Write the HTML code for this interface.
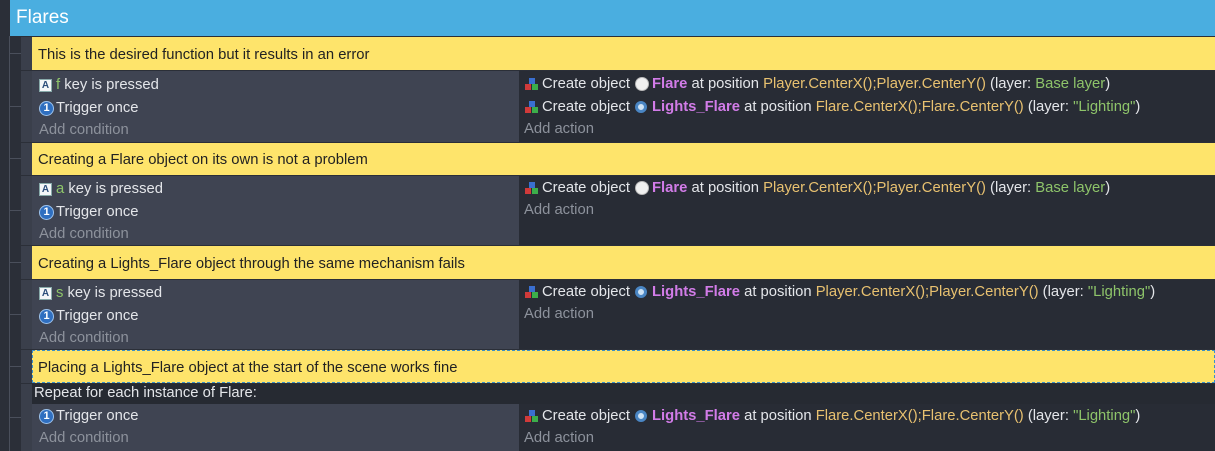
<!DOCTYPE html>
<html><head><meta charset="utf-8"><style>
*{margin:0;padding:0;box-sizing:border-box}
body{width:1215px;height:451px;background:#2b2f38;font-family:"Segoe UI","Liberation Sans",sans-serif;font-size:14.8px;color:#e4e6ea;position:relative;overflow:hidden}
.a{position:absolute}
.vl{left:9px;top:36px;width:1px;height:415px;background:#4a4f5b}
.tick{left:10px;width:11px;height:1px;background:#4a4f5b}
.hdr{left:10px;top:0;width:1205px;height:36px;background:#4aaee0;color:#fff;font-size:19px;padding:7px 0 0 6px}
.gut{left:21px;width:11px;background:#3a3f4b}
.cm{left:32px;width:1183px;background:#fee46b;color:#222;padding:2px 0 0 6px;display:flex;align-items:center}
.cond{left:32px;width:487px;background:#3f4452}
.act{left:519px;width:696px;background:#282c35}
.ln{position:absolute;white-space:nowrap;display:flex;align-items:center;margin-top:1px}
.gray{color:#8d929c}
.key{display:inline-block;width:13px;height:13px;background:#f4f6f8;border:1px solid #8aa;color:#2c4d7a;font-size:10px;font-weight:bold;text-align:center;line-height:12px;margin-right:4px}
.one{display:inline-block;width:15px;height:15px;border-radius:50%;background:#2f6fc0;border:1px solid #9cc3ee;color:#fff;font-size:11px;font-weight:bold;text-align:center;line-height:13px;margin-right:2px}
.g{color:#8ec46a}.y{color:#e8c170}.p{color:#d27ce8;font-weight:bold}
.cube{display:inline-block;width:14px;height:12px;position:relative;margin-right:3px}
.cube i{position:absolute;width:6px;height:6px}
.fl{display:inline-block;width:14px;height:14px;border-radius:50%;background:#f0f0f0;border:1px solid #bbb;margin:0 3px 0 5px}
.lf{display:inline-block;width:12px;height:12px;border-radius:50%;background:#cfe3f5;border:3px solid #4a86c4;margin:0 5px 0 5px}
</style></head><body>
<div class="a vl"></div>
<div class="a hdr">Flares</div>
<div class="a tick" style="top:53px"></div>
<div class="a tick" style="top:106px"></div>
<div class="a tick" style="top:158px"></div>
<div class="a tick" style="top:210px"></div>
<div class="a tick" style="top:262px"></div>
<div class="a tick" style="top:314px"></div>
<div class="a tick" style="top:366px"></div>
<div class="a tick" style="top:417px"></div>

<div class="a gut" style="top:37px;height:33px"></div>
<div class="a cm" style="top:37px;height:33px">This is the desired function but it results in an error</div>
<div class="a gut" style="top:71px;height:71px"></div>
<div class="a cond" style="top:71px;height:71px">
 <div class="ln" style="left:7px;top:5px"><span class="key">A</span><span class="g">f</span>&nbsp;key is pressed</div>
 <div class="ln" style="left:7px;top:28px"><span class="one">1</span>Trigger once</div>
 <div class="ln gray" style="left:7px;top:50px">Add condition</div>
</div>
<div class="a act" style="top:71px;height:71px">
 <div class="ln" style="left:6px;top:4px"><span class="cube"><i style="left:4px;top:0;background:#3a6fd0"></i><i style="left:0;top:6px;background:#d03a3a"></i><i style="left:7px;top:6px;background:#3cae4a"></i></span>Create object<span class="fl"></span><span class="p">Flare</span>&nbsp;at position&nbsp;<span class="y">Player.CenterX();Player.CenterY()</span>&nbsp;(layer:&nbsp;<span class="g">Base layer</span>)</div>
 <div class="ln" style="left:6px;top:27px"><span class="cube"><i style="left:4px;top:0;background:#3a6fd0"></i><i style="left:0;top:6px;background:#d03a3a"></i><i style="left:7px;top:6px;background:#3cae4a"></i></span>Create object<span class="lf"></span><span class="p">Lights_Flare</span>&nbsp;at position&nbsp;<span class="y">Flare.CenterX();Flare.CenterY()</span>&nbsp;(layer:&nbsp;<span class="g">"Lighting"</span>)</div>
 <div class="ln gray" style="left:5px;top:49px">Add action</div>
</div>

<div class="a gut" style="top:143px;height:32px"></div>
<div class="a cm" style="top:143px;height:32px">Creating a Flare object on its own is not a problem</div>
<div class="a gut" style="top:176px;height:69px"></div>
<div class="a cond" style="top:176px;height:69px">
 <div class="ln" style="left:7px;top:4px"><span class="key">A</span><span class="g">a</span>&nbsp;key is pressed</div>
 <div class="ln" style="left:7px;top:27px"><span class="one">1</span>Trigger once</div>
 <div class="ln gray" style="left:7px;top:49px">Add condition</div>
</div>
<div class="a act" style="top:176px;height:69px">
 <div class="ln" style="left:6px;top:3px"><span class="cube"><i style="left:4px;top:0;background:#3a6fd0"></i><i style="left:0;top:6px;background:#d03a3a"></i><i style="left:7px;top:6px;background:#3cae4a"></i></span>Create object<span class="fl"></span><span class="p">Flare</span>&nbsp;at position&nbsp;<span class="y">Player.CenterX();Player.CenterY()</span>&nbsp;(layer:&nbsp;<span class="g">Base layer</span>)</div>
 <div class="ln gray" style="left:5px;top:25px">Add action</div>
</div>

<div class="a gut" style="top:246px;height:33px"></div>
<div class="a cm" style="top:246px;height:33px">Creating a Lights_Flare object through the same mechanism fails</div>
<div class="a gut" style="top:280px;height:69px"></div>
<div class="a cond" style="top:280px;height:69px">
 <div class="ln" style="left:7px;top:4px"><span class="key">A</span><span class="g">s</span>&nbsp;key is pressed</div>
 <div class="ln" style="left:7px;top:27px"><span class="one">1</span>Trigger once</div>
 <div class="ln gray" style="left:7px;top:49px">Add condition</div>
</div>
<div class="a act" style="top:280px;height:69px">
 <div class="ln" style="left:6px;top:3px"><span class="cube"><i style="left:4px;top:0;background:#3a6fd0"></i><i style="left:0;top:6px;background:#d03a3a"></i><i style="left:7px;top:6px;background:#3cae4a"></i></span>Create object<span class="lf"></span><span class="p">Lights_Flare</span>&nbsp;at position&nbsp;<span class="y">Player.CenterX();Player.CenterY()</span>&nbsp;(layer:&nbsp;<span class="g">"Lighting"</span>)</div>
 <div class="ln gray" style="left:5px;top:25px">Add action</div>
</div>

<div class="a gut" style="top:350px;height:33px"></div>
<div class="a cm" style="top:350px;height:33px;border:1px dashed #3b8fc8;padding-left:5px">Placing a Lights_Flare object at the start of the scene works fine</div>
<div class="a gut" style="top:384px;height:67px"></div>
<div class="a" style="left:32px;top:384px;width:1183px;height:20px;background:#262a32;padding:1px 0 0 2px">Repeat for each instance of Flare:</div>
<div class="a cond" style="top:404px;height:47px">
 <div class="ln" style="left:7px;top:3px"><span class="one">1</span>Trigger once</div>
 <div class="ln gray" style="left:7px;top:25px">Add condition</div>
</div>
<div class="a act" style="top:404px;height:47px">
 <div class="ln" style="left:6px;top:3px"><span class="cube"><i style="left:4px;top:0;background:#3a6fd0"></i><i style="left:0;top:6px;background:#d03a3a"></i><i style="left:7px;top:6px;background:#3cae4a"></i></span>Create object<span class="lf"></span><span class="p">Lights_Flare</span>&nbsp;at position&nbsp;<span class="y">Flare.CenterX();Flare.CenterY()</span>&nbsp;(layer:&nbsp;<span class="g">"Lighting"</span>)</div>
 <div class="ln gray" style="left:5px;top:25px">Add action</div>
</div>
</body></html>
